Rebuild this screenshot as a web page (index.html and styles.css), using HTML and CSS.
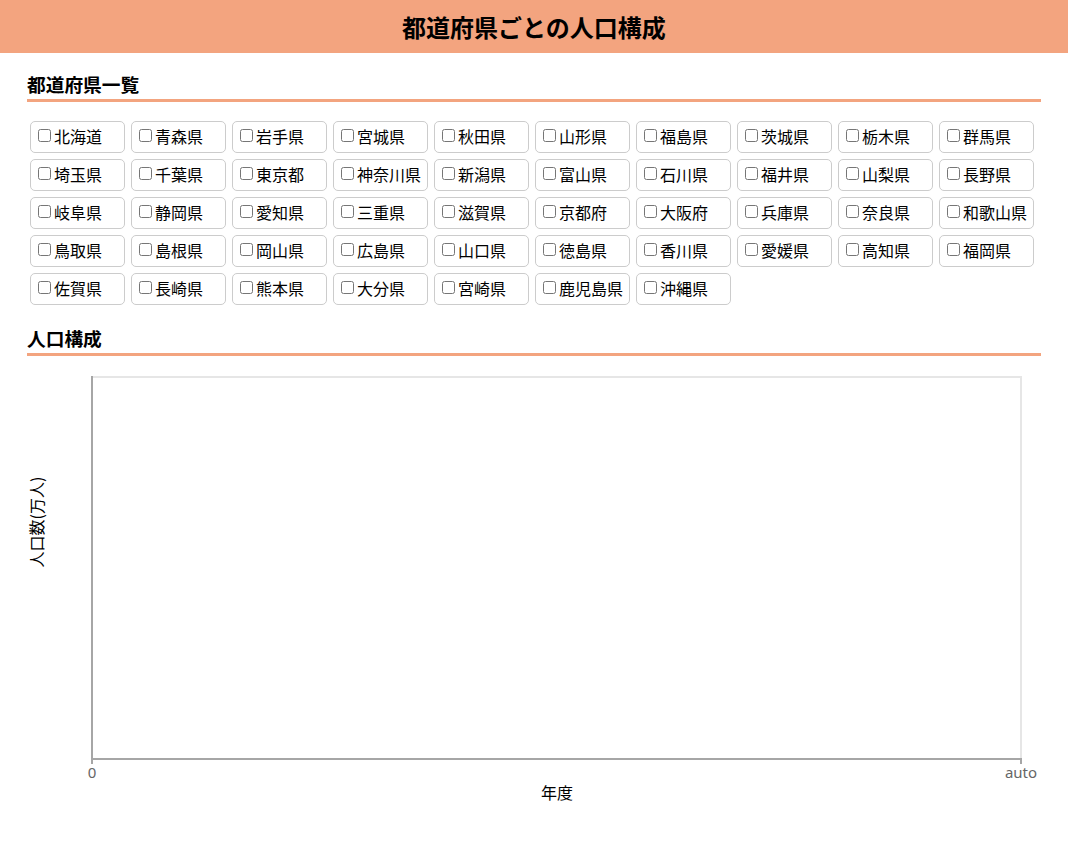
FILE: index.html
```html
<!DOCTYPE html>
<html lang="ja">
<head>
<meta charset="utf-8">
<title>都道府県ごとの人口構成</title>
<link rel="stylesheet" href="styles.css">
</head>
<body>
<header class="header"><h1 class="title">都道府県ごとの人口構成</h1></header>
<main class="main">
  <h3 class="section-title">都道府県一覧</h3>
  <div class="pref-list">
    <label class="pref"><input type="checkbox">北海道</label>
    <label class="pref"><input type="checkbox">青森県</label>
    <label class="pref"><input type="checkbox">岩手県</label>
    <label class="pref"><input type="checkbox">宮城県</label>
    <label class="pref"><input type="checkbox">秋田県</label>
    <label class="pref"><input type="checkbox">山形県</label>
    <label class="pref"><input type="checkbox">福島県</label>
    <label class="pref"><input type="checkbox">茨城県</label>
    <label class="pref"><input type="checkbox">栃木県</label>
    <label class="pref"><input type="checkbox">群馬県</label>
    <label class="pref"><input type="checkbox">埼玉県</label>
    <label class="pref"><input type="checkbox">千葉県</label>
    <label class="pref"><input type="checkbox">東京都</label>
    <label class="pref"><input type="checkbox">神奈川県</label>
    <label class="pref"><input type="checkbox">新潟県</label>
    <label class="pref"><input type="checkbox">富山県</label>
    <label class="pref"><input type="checkbox">石川県</label>
    <label class="pref"><input type="checkbox">福井県</label>
    <label class="pref"><input type="checkbox">山梨県</label>
    <label class="pref"><input type="checkbox">長野県</label>
    <label class="pref"><input type="checkbox">岐阜県</label>
    <label class="pref"><input type="checkbox">静岡県</label>
    <label class="pref"><input type="checkbox">愛知県</label>
    <label class="pref"><input type="checkbox">三重県</label>
    <label class="pref"><input type="checkbox">滋賀県</label>
    <label class="pref"><input type="checkbox">京都府</label>
    <label class="pref"><input type="checkbox">大阪府</label>
    <label class="pref"><input type="checkbox">兵庫県</label>
    <label class="pref"><input type="checkbox">奈良県</label>
    <label class="pref"><input type="checkbox">和歌山県</label>
    <label class="pref"><input type="checkbox">鳥取県</label>
    <label class="pref"><input type="checkbox">島根県</label>
    <label class="pref"><input type="checkbox">岡山県</label>
    <label class="pref"><input type="checkbox">広島県</label>
    <label class="pref"><input type="checkbox">山口県</label>
    <label class="pref"><input type="checkbox">徳島県</label>
    <label class="pref"><input type="checkbox">香川県</label>
    <label class="pref"><input type="checkbox">愛媛県</label>
    <label class="pref"><input type="checkbox">高知県</label>
    <label class="pref"><input type="checkbox">福岡県</label>
    <label class="pref"><input type="checkbox">佐賀県</label>
    <label class="pref"><input type="checkbox">長崎県</label>
    <label class="pref"><input type="checkbox">熊本県</label>
    <label class="pref"><input type="checkbox">大分県</label>
    <label class="pref"><input type="checkbox">宮崎県</label>
    <label class="pref"><input type="checkbox">鹿児島県</label>
    <label class="pref"><input type="checkbox">沖縄県</label>
  </div>
  <h3 class="section-title section-title-2">人口構成</h3>
  <svg class="chart" width="1014" height="460" viewBox="0 0 1014 460">
    <line class="grid" x1="64" y1="21" x2="995" y2="21"/>
    <line class="grid" x1="994" y1="20" x2="994" y2="403"/>
    <line class="axis" x1="65" y1="20" x2="65" y2="404"/>
    <line class="axis" x1="64" y1="403" x2="995" y2="403"/>
    <line class="axis" x1="65" y1="403" x2="65" y2="408"/>
    <line class="axis" x1="994" y1="403" x2="994" y2="408"/>
    <text class="tick" x="65" y="422" text-anchor="middle">0</text>
    <text class="tick" x="994" y="422" text-anchor="middle">auto</text>
    <text class="axis-label" x="530" y="443" text-anchor="middle">年度</text>
    <text class="axis-label" transform="translate(16 166) rotate(-90)" text-anchor="middle">人口数(万人)</text>
  </svg>
</main>
</body>
</html>
```
FILE: styles.css
```css
* { box-sizing: border-box; }
body {
  margin: 0;
  font-family: "Noto Sans CJK JP", "Noto Sans", sans-serif;
  color: #000;
  background: #fff;
}
.header {
  height: 53px;
  background: #f3a47f;
  display: flex;
  align-items: center;
  justify-content: center;
}
.title {
  margin: 0;
  font-size: 24px;
  font-weight: bold;
  line-height: 30px;
}
.main {
  padding: 0 27px;
}
.section-title {
  margin: 19px 0 0;
  font-size: 18.72px;
  font-weight: bold;
  line-height: 24px;
  padding-bottom: 3px;
  border-bottom: 3px solid #f3a47f;
}
.section-title-2 {
  margin-top: 18px;
}
.pref-list {
  display: flex;
  flex-wrap: wrap;
  margin-top: 16px;
}
.pref {
  width: 95px;
  height: 32px;
  margin: 3px;
  padding: 0 3px 3px;
  border: 1px solid #ccc;
  border-radius: 5px;
  display: flex;
  align-items: center;
  font-size: 16px;
  line-height: 20px;
  white-space: nowrap;
}
.pref input {
  margin: 0 3px 0 4px;
  width: 13px;
  height: 13px;
}
.chart {
  display: block;
  overflow: visible;
}
.grid {
  stroke: #e6e6e6;
  stroke-width: 2;
}
.axis {
  stroke: #a6a6a6;
  stroke-width: 2;
}
.tick {
  font-family: "Noto Sans", sans-serif;
  font-size: 15px;
  fill: #666;
}
.axis-label {
  font-family: "Noto Sans CJK JP", sans-serif;
  font-size: 16px;
  fill: #000;
}
```
